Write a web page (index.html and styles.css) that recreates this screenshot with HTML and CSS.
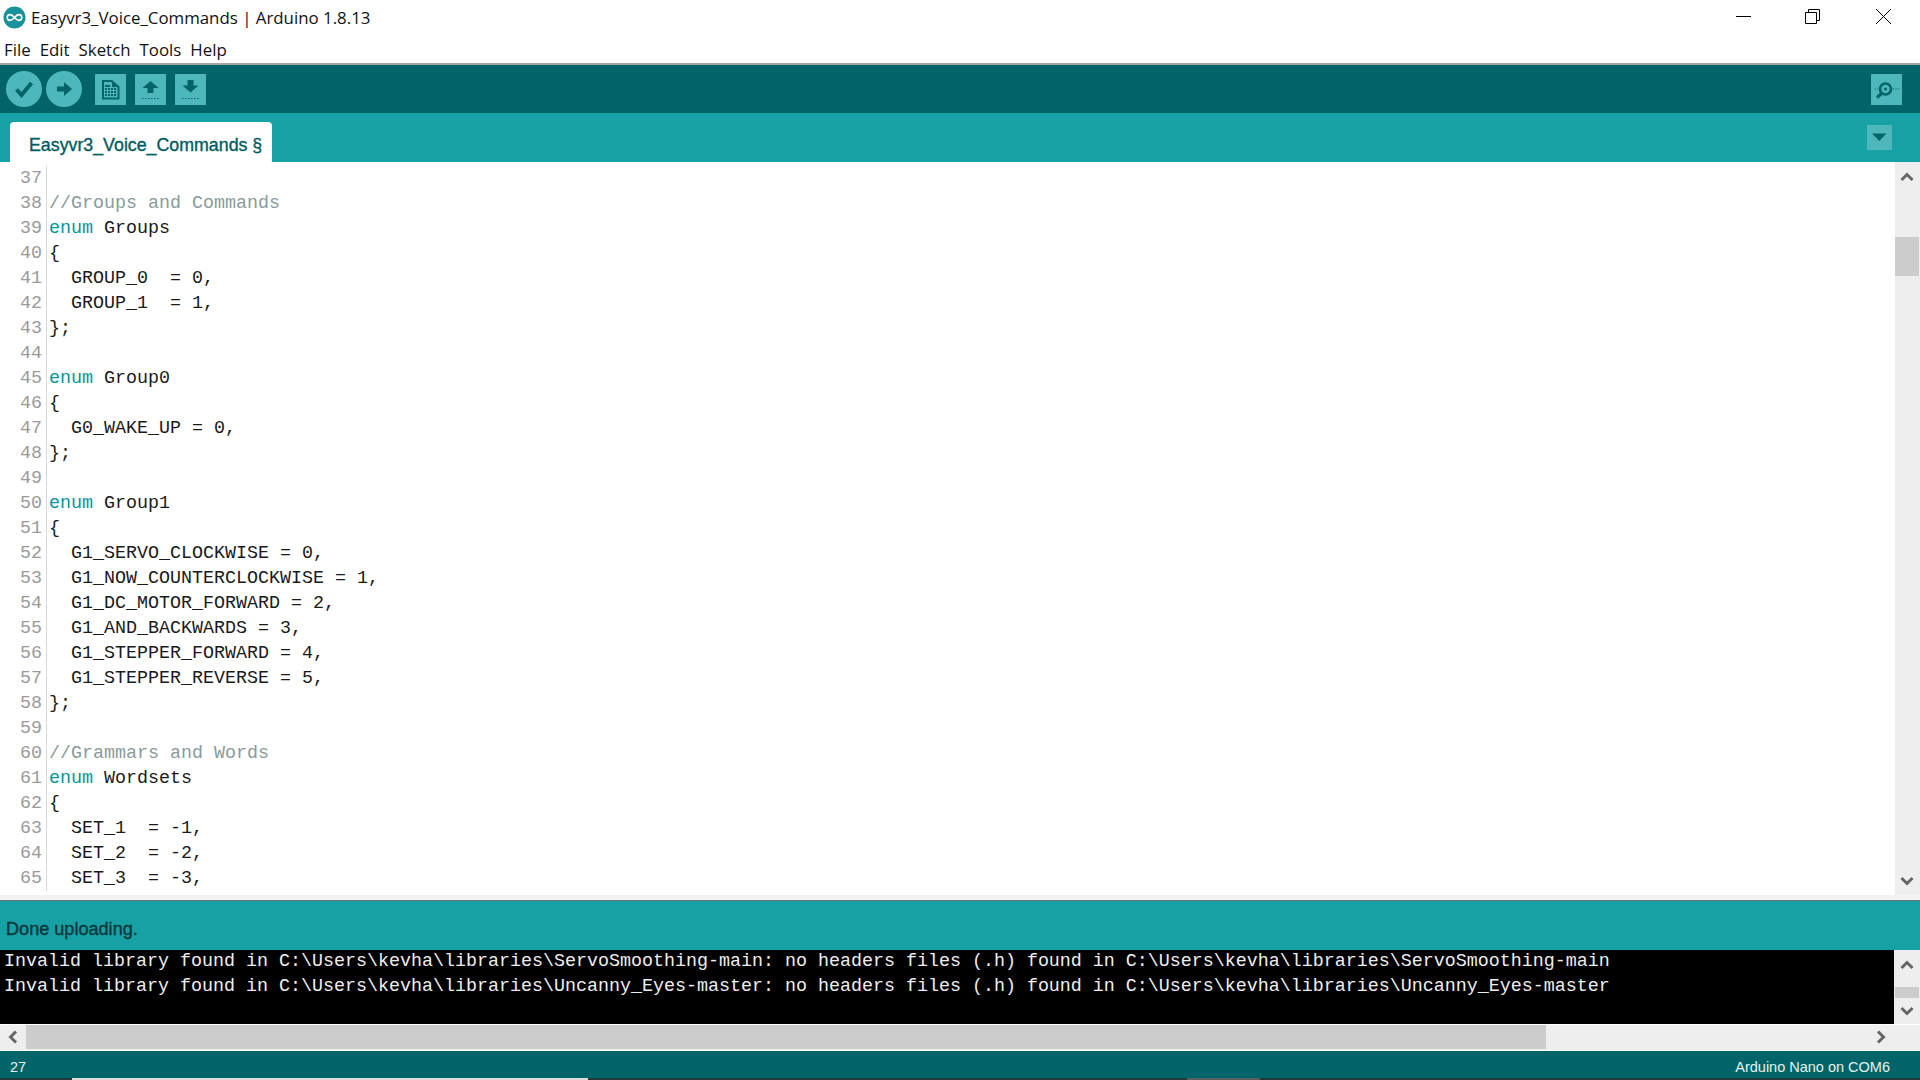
FILE: index.html
```html
<!DOCTYPE html>
<html lang="en">
<head>
<meta charset="utf-8">
<title>Easyvr3_Voice_Commands | Arduino 1.8.13</title>
<link rel="stylesheet" href="styles.css">
</head>
<body>
<div class="app">
  <header class="titlebar">
    <svg class="logo" viewBox="0 0 24 24"><circle cx="12" cy="12" r="11.5" fill="#17929a"/><path d="M12 12c-1.6-2-3-3-4.6-3a3 3 0 0 0 0 6c1.6 0 3-1 4.6-3c1.6-2 3-3 4.6-3a3 3 0 0 1 0 6c-1.600 0-3-1-4.600-3z" fill="none" stroke="#fff" stroke-width="1.600"/></svg>
    <span class="title">Easyvr3_Voice_Commands | Arduino 1.8.13</span>
    <div class="winctl">
      <svg class="wbtn" viewBox="0 0 15 15"><path d="M0 7.500h15" stroke="#000" stroke-width="1"/></svg>
      <svg class="wbtn" viewBox="0 0 15 15"><path d="M.5 3.500h11v11H.5zM3.500 3.500V.5h11v11h-3" fill="none" stroke="#000" stroke-width="1"/></svg>
      <svg class="wbtn close" viewBox="0 0 15 15"><path d="M0 0l15 15M15 0L0 15" stroke="#000" stroke-width="1"/></svg>
    </div>
  </header>
  <nav class="menubar"><span>File</span><span>Edit</span><span>Sketch</span><span>Tools</span><span>Help</span></nav>
  <div class="toolbar">
    <div class="round"><svg viewBox="0 0 36 36"><path d="M10.500 18.500l5 5.500 10-12" fill="none" stroke="#006468" stroke-width="4"/></svg></div>
    <div class="round second"><svg viewBox="0 0 36 36"><path d="M11 15.500h7V11l8 7-8 7v-4.500h-7z" fill="#006468"/></svg></div>
    <div class="sq first"><svg viewBox="0 0 31 31"><path d="M8 7h8.500l7 6v11.500H8z" fill="none" stroke="#006468" stroke-width="2"/><path d="M17 6.500v6.500h7zM10 11h5v2h-5zM10 14h2v2h-2zM13 14h2v2h-2zM16 14h2v2h-2zM19 14h2v2h-2zM10 17h2v2h-2zM13 17h2v2h-2zM16 17h2v2h-2zM19 17h2v2h-2zM10 20h2v2h-2zM13 20h2v2h-2zM16 20h2v2h-2zM19 20h2v2h-2z" fill="#006468"/></svg></div>
    <div class="sq"><svg viewBox="0 0 31 31"><path d="M15.500 7l8 7h-5v5h-6v-5h-5z" fill="#006468"/><path d="M7 24.500h17" stroke="#006468" stroke-width="1" stroke-dasharray="1.500 1.500"/></svg></div>
    <div class="sq"><svg viewBox="0 0 31 31"><path d="M15.500 18.500l8-7h-5V6h-6v5.500h-5z" fill="#006468"/><path d="M7 24.500h17" stroke="#006468" stroke-width="1" stroke-dasharray="1.500 1.500"/></svg></div>
    <div class="sq monitor"><svg viewBox="0 0 31 31"><circle cx="14.500" cy="15" r="5.500" fill="none" stroke="#006468" stroke-width="2.600"/><circle cx="14.500" cy="15" r="1.500" fill="#006468"/><path d="M10.500 19.500l-4.500 4" stroke="#006468" stroke-width="3.200"/><path d="M4 15h3M22 15h6" stroke="#006468" stroke-dasharray="1 1.500"/></svg></div>
  </div>
  <div class="tabbar">
    <div class="tab">Easyvr3_Voice_Commands §</div>
    <div class="tabmenu"><svg viewBox="0 0 25 25"><path d="M5 8.500h14.500l-7.250 7.500z" fill="#006468"/></svg></div>
  </div>
  <main class="editor">
    <div class="code">
      <div class="ln"><i>37</i><b></b></div>
      <div class="ln"><i>38</i><b class="cm">//Groups and Commands</b></div>
      <div class="ln"><i>39</i><b><u>enum</u> Groups</b></div>
      <div class="ln"><i>40</i><b>{</b></div>
      <div class="ln"><i>41</i><b>  GROUP_0  = 0,</b></div>
      <div class="ln"><i>42</i><b>  GROUP_1  = 1,</b></div>
      <div class="ln"><i>43</i><b>};</b></div>
      <div class="ln"><i>44</i><b></b></div>
      <div class="ln"><i>45</i><b><u>enum</u> Group0</b></div>
      <div class="ln"><i>46</i><b>{</b></div>
      <div class="ln"><i>47</i><b>  G0_WAKE_UP = 0,</b></div>
      <div class="ln"><i>48</i><b>};</b></div>
      <div class="ln"><i>49</i><b></b></div>
      <div class="ln"><i>50</i><b><u>enum</u> Group1</b></div>
      <div class="ln"><i>51</i><b>{</b></div>
      <div class="ln"><i>52</i><b>  G1_SERVO_CLOCKWISE = 0,</b></div>
      <div class="ln"><i>53</i><b>  G1_NOW_COUNTERCLOCKWISE = 1,</b></div>
      <div class="ln"><i>54</i><b>  G1_DC_MOTOR_FORWARD = 2,</b></div>
      <div class="ln"><i>55</i><b>  G1_AND_BACKWARDS = 3,</b></div>
      <div class="ln"><i>56</i><b>  G1_STEPPER_FORWARD = 4,</b></div>
      <div class="ln"><i>57</i><b>  G1_STEPPER_REVERSE = 5,</b></div>
      <div class="ln"><i>58</i><b>};</b></div>
      <div class="ln"><i>59</i><b></b></div>
      <div class="ln"><i>60</i><b class="cm">//Grammars and Words</b></div>
      <div class="ln"><i>61</i><b><u>enum</u> Wordsets</b></div>
      <div class="ln"><i>62</i><b>{</b></div>
      <div class="ln"><i>63</i><b>  SET_1  = -1,</b></div>
      <div class="ln"><i>64</i><b>  SET_2  = -2,</b></div>
      <div class="ln"><i>65</i><b>  SET_3  = -3,</b></div>
    </div>
    <div class="vscroll tall">
      <svg class="arrow" viewBox="0 0 24 24"><path d="M6.500 15l5.500-5.500 5.500 5.500" fill="none" stroke="#666" stroke-width="3"/></svg>
      <div class="thumb main-thumb"></div>
      <svg class="arrow" viewBox="0 0 24 24"><path d="M6.500 9l5.500 5.500 5.500-5.500" fill="none" stroke="#666" stroke-width="3"/></svg>
    </div>
  </main>
  <div class="sep"></div>
  <div class="status">Done uploading.</div>
  <section class="console">
    <pre class="output">Invalid library found in C:\Users\kevha\libraries\ServoSmoothing-main: no headers files (.h) found in C:\Users\kevha\libraries\ServoSmoothing-main
Invalid library found in C:\Users\kevha\libraries\Uncanny_Eyes-master: no headers files (.h) found in C:\Users\kevha\libraries\Uncanny_Eyes-master</pre>
    <div class="vscroll short">
      <svg class="arrow" viewBox="0 0 24 24"><path d="M6.500 15l5.500-5.500 5.500 5.500" fill="none" stroke="#666" stroke-width="3"/></svg>
      <div class="thumb con-thumb"></div>
      <svg class="arrow" viewBox="0 0 24 24"><path d="M6.500 9l5.500 5.500 5.500-5.500" fill="none" stroke="#666" stroke-width="3"/></svg>
    </div>
  </section>
  <div class="hscroll">
    <svg class="harrow" viewBox="0 0 26 24"><path d="M16 6.500l-5.500 5.500 5.500 5.500" fill="none" stroke="#666" stroke-width="3"/></svg>
    <div class="hthumb"></div>
    <svg class="harrow right" viewBox="0 0 26 24"><path d="M10 6.500l5.500 5.500-5.500 5.500" fill="none" stroke="#666" stroke-width="3"/></svg>
  </div>
  <footer class="footer"><span>27</span><span class="board">Arduino Nano on COM6</span></footer>
  <div class="taskstrip"><span class="seg-a"></span><span class="seg-b"></span><span class="seg-c"></span><span class="seg-d"></span></div>
</div>
</body>
</html>
```
FILE: styles.css
```css
* { box-sizing: border-box; }
html, body { margin: 0; padding: 0; }
body { width: 1920px; height: 1080px; overflow: hidden; background: #fff; }
.app { display: flex; flex-direction: column; width: 1920px; height: 1080px; font-family: "Open Sans", "Noto Sans", sans-serif; color: #000; }

.titlebar { display: flex; align-items: center; height: 38px; flex: none; padding: 0 0 4px 3px; }
.logo { width: 23px; height: 23px; flex: none; }
.title { margin-left: 5px; font-size: 16.85px; color: #111; }
.winctl { display: flex; margin-left: auto; padding: 0 29px 1px 0; gap: 54px; }
.wbtn { width: 15px; height: 15px; display: block; }
.wbtn.close { margin-left: 2px; }

.menubar { display: flex; height: 25px; flex: none; gap: 9px; padding-left: 4px; font-size: 16.85px; line-height: 23px; color: #111; }

.toolbar { display: flex; align-items: center; flex: none; height: 50px; padding: 0 18px 0 6px; background: #006468; border-top: 2px solid #a5a5a5; }
.round { width: 36px; height: 36px; border-radius: 50%; background: #4db7bb; flex: none; }
.round.second { margin-left: 4px; }
.round svg, .sq svg, .tabmenu svg { display: block; width: 100%; height: 100%; }
.sq { width: 31px; height: 31px; background: #4db7bb; flex: none; margin-left: 9px; }
.sq.first { margin-left: 13px; }
.sq.monitor { margin-left: auto; }

.tabbar { display: flex; align-items: flex-end; justify-content: space-between; flex: none; height: 49px; padding: 0 28px 0 10px; background: #17a1a5; }
.tab { width: 262px; height: 40px; padding: 13px 0 0 19px; background: #fff; border-radius: 4px 4px 0 0; font-family: "Liberation Sans", Arial, sans-serif; font-size: 17.8px; font-weight: 400; line-height: 21px; color: #005c5f; -webkit-text-stroke: 0.35px #005c5f; white-space: nowrap; }
.tabmenu { width: 25px; height: 25px; background: #4db7bb; align-self: flex-start; margin-top: 12px; }

.editor { display: flex; flex: none; height: 733px; background: #fff; }
.code { flex: 1; padding-top: 4px; overflow: hidden; font-family: "Liberation Mono", "Courier New", monospace; font-size: 18.33px; line-height: 25px; }
.ln { display: flex; height: 25px; }
.ln i { width: 47px; flex: none; padding-right: 4px; font-style: normal; text-align: right; color: #9a9a9a; border-right: 1px solid #d8d8d8; }
.ln b { padding-left: 2px; font-weight: 400; white-space: pre; color: #1a1a1a; }
.ln u { text-decoration: none; color: #00979c; }
.ln b.cm { color: #8a9a9b; }

.vscroll { display: flex; flex-direction: column; flex: none; width: 25px; background: #eee; }
.arrow { display: block; width: 24px; height: 24px; flex: none; }
.thumb { width: 24px; background: #ccc; }
.vscroll.tall .arrow:first-child { margin-top: 3px; }
.main-thumb { height: 39px; margin: 48px 0 auto; }
.vscroll.tall .arrow:last-child { margin-bottom: 2px; }
.vscroll.short { width: 26px; height: 74px; }
.vscroll.short .arrow { margin-left: 1px; }
.vscroll.short .arrow:first-child { margin-top: 3px; }
.con-thumb { height: 11px; margin: 10px 0 0 1px; }
.vscroll.short .arrow:last-child { margin-top: 1px; }

.sep { flex: none; height: 6px; background: #f3f3f3; border-bottom: 1px solid #6f6f6f; }
.status { flex: none; height: 49px; padding: 16px 0 0 6px; background: #17a1a5; font-family: "Liberation Sans", Arial, sans-serif; font-size: 18.1px; line-height: 24px; color: #06373a; -webkit-text-stroke: 0.35px #06373a; }

.console { display: flex; flex: none; height: 74px; background: #000; }
.output { flex: 1; margin: -1px 0 0; padding: 0 0 0 4px; overflow: hidden; font-family: "Liberation Mono", "Courier New", monospace; font-size: 18.33px; line-height: 25px; color: #eee; white-space: pre; }

.hscroll { display: flex; flex: none; height: 26px; background: #eee; border-top: 1px solid #fff; }
.harrow { display: block; width: 26px; height: 24px; flex: none; }
.harrow.right { margin-left: auto; margin-right: 26px; }
.hthumb { width: 1520px; height: 24px; background: #ccc; }

.footer { display: flex; align-items: center; justify-content: space-between; flex: none; height: 28px; padding: 4px 30px 0 10px; background: #006468; border-top: 1px solid #fff; font-family: "Liberation Sans", Arial, sans-serif; font-size: 14.500px; color: #e6f2f2; }
.taskstrip { display: flex; flex: none; height: 2px; background: #1f3a38; }
.seg-a { width: 72px; }
.seg-b { width: 516px; background: #dcdcdc; }
.seg-c { width: 599px; }
.seg-d { width: 73px; background: #55605f; }
```
